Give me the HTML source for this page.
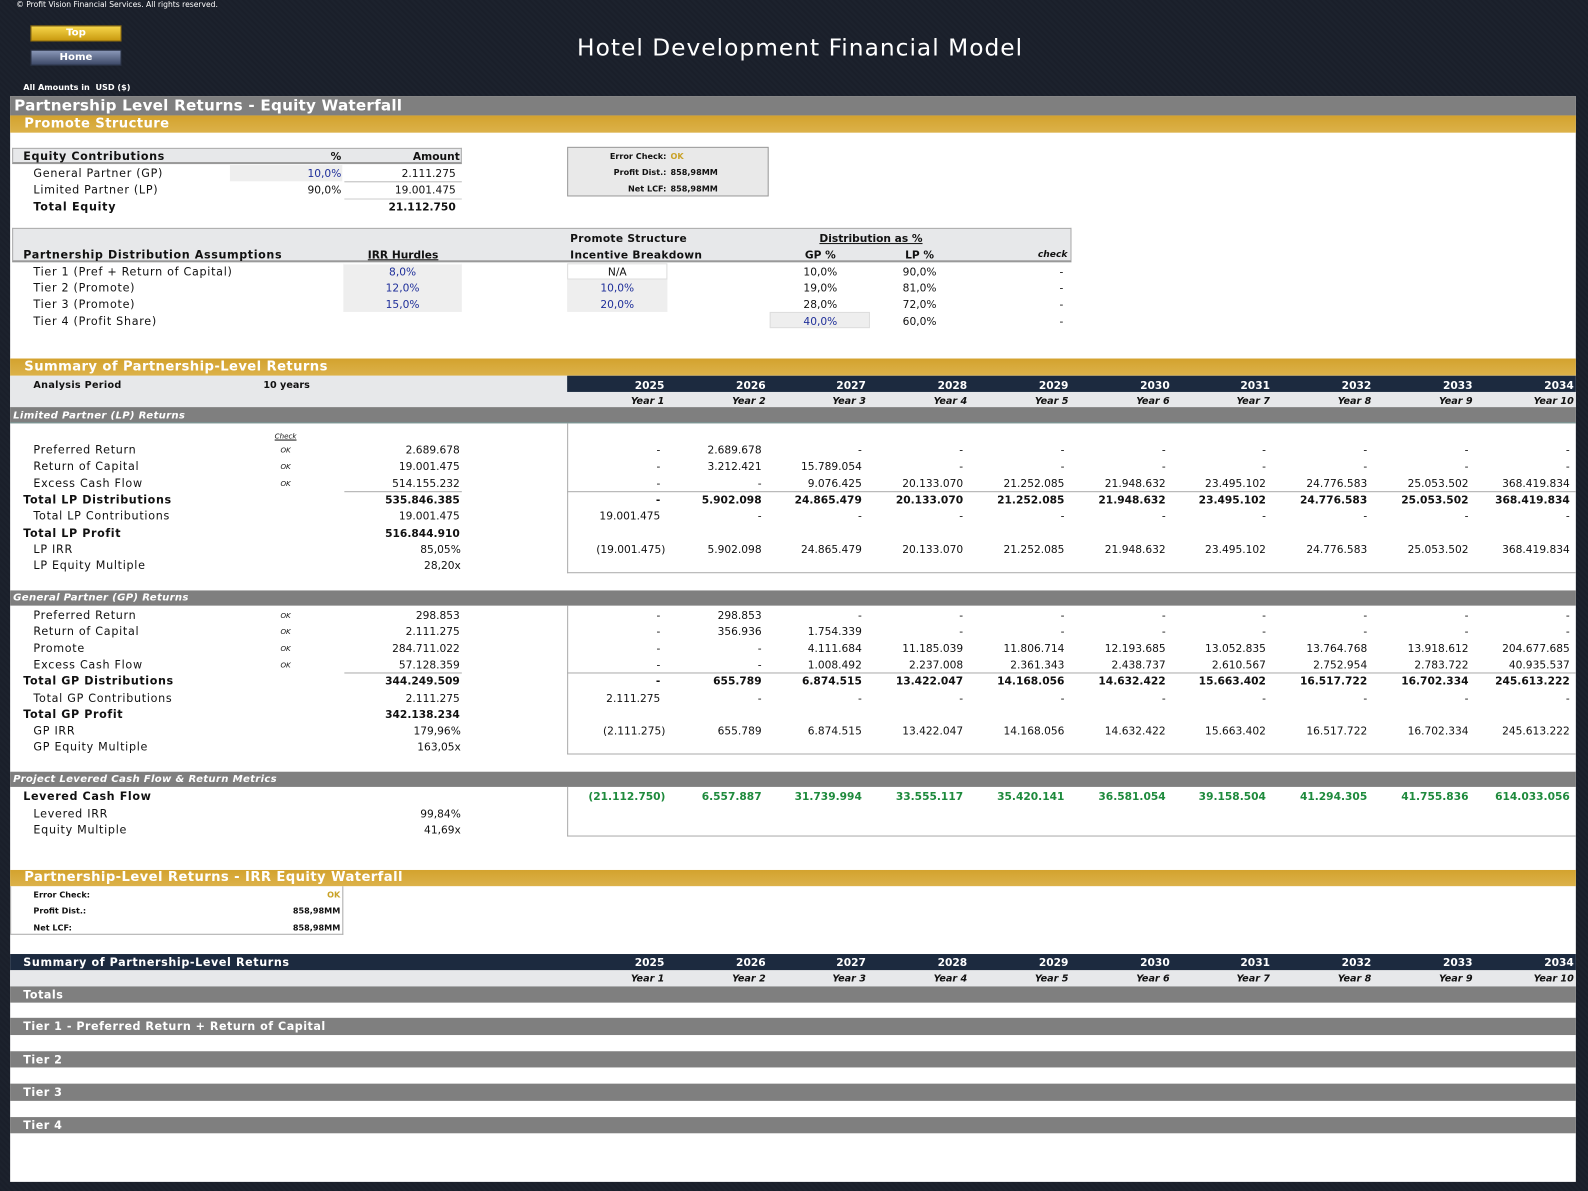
<!DOCTYPE html>
<html><head><meta charset="utf-8"><style>
*{margin:0;padding:0;box-sizing:border-box}
html,body{width:1588px;height:1191px;overflow:hidden;background:#1b202b}
body{font-family:"DejaVu Sans","Liberation Sans",sans-serif;color:#111}
.w{position:absolute;left:0;top:0;width:1568px;height:1176px;transform:scale(1.01276,1.01276);transform-origin:0 0;background:repeating-linear-gradient(45deg,#1a1f2a 0 2px,#20263222 2px 4px),#1c212c}
.a{position:absolute}
.r{position:absolute;left:0;width:1568px;height:14px;line-height:14px;font-size:10.5px}
.r span{position:absolute;white-space:nowrap}
.b{font-weight:bold}
.l1{left:23px;font-size:11px;letter-spacing:.6px}.l2{left:33px;font-size:11px;letter-spacing:.7px}
.ck{left:262px;width:40px;text-align:center;font-style:italic;font-size:7px}
.v{left:340px;width:114px;text-align:right}
.c1{left:556px}.c2{left:656px}.c3{left:755px}.c4{left:855px}.c5{left:955px}.c6{left:1055px}.c7{left:1154px}.c8{left:1254px}.c9{left:1354px}.c10{left:1454px}
.r .c1,.r .c2,.r .c3,.r .c4,.r .c5,.r .c6,.r .c7,.r .c8,.r .c9,.r .c10{width:96px;text-align:right}
.yr .c1,.yr .c2,.yr .c3,.yr .c4,.yr .c5,.yr .c6,.yr .c7,.yr .c8,.yr .c9,.yr .c10{width:100px}
.gray{position:absolute;left:10px;width:1546px;background:#7f7f7f;color:#fff;font-weight:bold}
.gold{position:absolute;left:10px;width:1546px;background:linear-gradient(#d3a22e,#dcb24a);color:#fff;font-weight:bold;font-size:13px;padding-left:14px;letter-spacing:.4px}
.navy{background:#1c2a3f;color:#fff;font-weight:bold}
.lg{background:#e7e8ea}
.g{color:#1e8a3c;font-weight:bold}
.blue{color:#1f2f9a}
</style></head><body><div class="w">
<div class="a" style="left:16px;top:0;font-size:7.5px;color:#fff">© Profit Vision Financial Services. All rights reserved.</div>
<div class="a" style="left:30px;top:25px;width:90px;height:16px;background:linear-gradient(#f6d64a,#c99a10);border:1px solid #8a6a10;color:#fff;font-weight:bold;font-size:10px;text-align:center;line-height:14px">Top</div>
<div class="a" style="left:30px;top:49px;width:90px;height:16px;background:linear-gradient(#8a98b8,#3c4866);border:1px solid #2a3244;color:#fff;font-weight:bold;font-size:10px;text-align:center;line-height:14px">Home</div>
<div class="a" style="left:490px;top:35px;width:600px;text-align:center;color:#fff;font-size:23px;letter-spacing:1px">Hotel Development Financial Model</div>
<div class="a" style="left:23px;top:82px;color:#fff;font-size:8px;font-weight:bold">All Amounts in&nbsp; USD ($)</div>

<div class="a" style="left:10px;top:95px;width:1546px;height:1072px;background:#fff"></div>
<div class="gray" style="top:95px;height:19px;font-size:15px;line-height:19px;padding-left:4px;letter-spacing:.2px">Partnership Level Returns - Equity Waterfall</div>
<div class="gold" style="top:114px;height:17px;line-height:17px">Promote Structure</div>

<div class="a lg" style="left:12px;top:146px;width:444px;height:16px;border:1px solid #aaa;border-bottom:2px solid #999"></div>
<div class="a" style="left:227px;top:163px;width:111px;height:16px;background:#eee"></div>
<div class="a" style="left:340px;top:179px;width:116px;height:1px;background:#bbb"></div>
<div class="a" style="left:340px;top:196px;width:116px;height:1px;background:#ccc"></div>
<div class="r b" style="top:148px"><span class="l1">Equity Contributions</span><span style="left:300px;width:37px;text-align:right">%</span><span class="v">Amount</span></div>
<div class="r" style="top:165px"><span class="l2">General Partner (GP)</span><span class="blue" style="left:260px;width:77px;text-align:right">10,0%</span><span class="v" style="width:110px">2.111.275</span></div>
<div class="r" style="top:181px"><span class="l2">Limited Partner (LP)</span><span style="left:260px;width:77px;text-align:right">90,0%</span><span class="v" style="width:110px">19.001.475</span></div>
<div class="r b" style="top:198px"><span class="l2">Total Equity</span><span class="v" style="width:110px">21.112.750</span></div>

<div class="a" style="left:560px;top:145px;width:199px;height:49px;background:#e9e9e9;border:1px solid #999"></div>
<div class="r b" style="top:148px;font-size:8px"><span style="left:560px;width:98px;text-align:right">Error Check:</span><span style="left:662px;color:#c9a227">OK</span></div>
<div class="r b" style="top:164px;font-size:8px"><span style="left:560px;width:98px;text-align:right">Profit Dist.:</span><span style="left:662px">858,98MM</span></div>
<div class="r b" style="top:180px;font-size:8px"><span style="left:560px;width:98px;text-align:right">Net LCF:</span><span style="left:662px">858,98MM</span></div>

<div class="a lg" style="left:12px;top:225px;width:1046px;height:34px;border:1px solid #aaa;border-bottom:2px solid #999"></div>
<div class="r b" style="top:229px"><span style="left:563px;letter-spacing:.3px">Promote Structure</span><span style="left:780px;width:160px;text-align:center;text-decoration:underline">Distribution as %</span></div>
<div class="r b" style="top:245px"><span class="l1">Partnership Distribution Assumptions</span><span style="left:340px;width:116px;text-align:center;text-decoration:underline">IRR Hurdles</span><span style="left:563px;letter-spacing:.3px">Incentive Breakdown</span><span style="left:770px;width:80px;text-align:center">GP %</span><span style="left:868px;width:80px;text-align:center">LP %</span><span style="left:1000px;width:54px;text-align:right;font-style:italic;font-size:9px">check</span></div>
<div class="a" style="left:339px;top:260px;width:117px;height:48px;background:#eee;border-top:1px solid #fff"></div>
<div class="a" style="left:560px;top:260px;width:99px;height:16px;background:#fff;border:1px solid #ddd"></div>
<div class="a" style="left:560px;top:276px;width:99px;height:32px;background:#eee"></div>
<div class="a" style="left:760px;top:308px;width:99px;height:16px;background:#eee;border:1px solid #ddd"></div>
<div class="r" style="top:262px"><span class="l2">Tier 1 (Pref + Return of Capital)</span><span class="blue" style="left:339px;width:117px;text-align:center">8,0%</span><span style="left:560px;width:99px;text-align:center">N/A</span><span style="left:770px;width:80px;text-align:center">10,0%</span><span style="left:868px;width:80px;text-align:center">90,0%</span><span style="left:1000px;width:50px;text-align:right">-</span></div>
<div class="r" style="top:278px"><span class="l2">Tier 2 (Promote)</span><span class="blue" style="left:339px;width:117px;text-align:center">12,0%</span><span class="blue" style="left:560px;width:99px;text-align:center">10,0%</span><span style="left:770px;width:80px;text-align:center">19,0%</span><span style="left:868px;width:80px;text-align:center">81,0%</span><span style="left:1000px;width:50px;text-align:right">-</span></div>
<div class="r" style="top:294px"><span class="l2">Tier 3 (Promote)</span><span class="blue" style="left:339px;width:117px;text-align:center">15,0%</span><span class="blue" style="left:560px;width:99px;text-align:center">20,0%</span><span style="left:770px;width:80px;text-align:center">28,0%</span><span style="left:868px;width:80px;text-align:center">72,0%</span><span style="left:1000px;width:50px;text-align:right">-</span></div>
<div class="r" style="top:311px"><span class="l2">Tier 4 (Profit Share)</span><span class="blue" style="left:770px;width:80px;text-align:center">40,0%</span><span style="left:868px;width:80px;text-align:center">60,0%</span><span style="left:1000px;width:50px;text-align:right">-</span></div>

<div class="gold" style="top:354px;height:17px;line-height:17px">Summary of Partnership-Level Returns</div>
<div class="a lg" style="left:10px;top:371px;width:1546px;height:31px"></div>
<div class="a navy" style="left:560px;top:371px;width:996px;height:16px"></div>
<div class="r b" style="top:374px;font-size:9.5px"><span class="l2" style="font-size:9.5px;letter-spacing:.3px">Analysis Period</span><span style="left:260px">10 years</span></div>
<div class="r yr b" style="top:374px;color:#fff"><span class="c1">2025</span><span class="c2">2026</span><span class="c3">2027</span><span class="c4">2028</span><span class="c5">2029</span><span class="c6">2030</span><span class="c7">2031</span><span class="c8">2032</span><span class="c9">2033</span><span class="c10">2034</span></div>
<div class="r yr b" style="top:390px;font-style:italic;font-size:9.5px"><span class="c1">Year 1</span><span class="c2">Year 2</span><span class="c3">Year 3</span><span class="c4">Year 4</span><span class="c5">Year 5</span><span class="c6">Year 6</span><span class="c7">Year 7</span><span class="c8">Year 8</span><span class="c9">Year 9</span><span class="c10">Year 10</span></div>

<div class="gray" style="top:402px;height:16px;line-height:17px;font-size:10px;font-style:italic;padding-left:3px;border-bottom:1px solid #7a9a98;letter-spacing:.3px">Limited Partner (LP) Returns</div>
<div class="a" style="left:560px;top:418px;width:996px;height:148px;border-left:1px solid #aaa;border-bottom:1px solid #aaa"></div>
<div class="a" style="left:340px;top:485px;width:116px;height:1px;background:#aaa"></div>
<div class="a" style="left:560px;top:485px;width:996px;height:1px;background:#aaa"></div>
<div class="r" style="top:424px"><span class="ck" style="text-decoration:underline">Check</span></div>
<div class="r" style="top:438px"><span class="l2">Preferred Return</span><span class="ck">OK</span><span class="v">2.689.678</span><span class="c1">-</span><span class="c2">2.689.678</span><span class="c3">-</span><span class="c4">-</span><span class="c5">-</span><span class="c6">-</span><span class="c7">-</span><span class="c8">-</span><span class="c9">-</span><span class="c10">-</span></div>
<div class="r" style="top:454px"><span class="l2">Return of Capital</span><span class="ck">OK</span><span class="v">19.001.475</span><span class="c1">-</span><span class="c2">3.212.421</span><span class="c3">15.789.054</span><span class="c4">-</span><span class="c5">-</span><span class="c6">-</span><span class="c7">-</span><span class="c8">-</span><span class="c9">-</span><span class="c10">-</span></div>
<div class="r" style="top:471px"><span class="l2">Excess Cash Flow</span><span class="ck">OK</span><span class="v">514.155.232</span><span class="c1">-</span><span class="c2">-</span><span class="c3">9.076.425</span><span class="c4">20.133.070</span><span class="c5">21.252.085</span><span class="c6">21.948.632</span><span class="c7">23.495.102</span><span class="c8">24.776.583</span><span class="c9">25.053.502</span><span class="c10">368.419.834</span></div>
<div class="r b" style="top:487px"><span class="l1">Total LP Distributions</span><span class="v">535.846.385</span><span class="c1">-</span><span class="c2">5.902.098</span><span class="c3">24.865.479</span><span class="c4">20.133.070</span><span class="c5">21.252.085</span><span class="c6">21.948.632</span><span class="c7">23.495.102</span><span class="c8">24.776.583</span><span class="c9">25.053.502</span><span class="c10">368.419.834</span></div>
<div class="r" style="top:503px"><span class="l2">Total LP Contributions</span><span class="v">19.001.475</span><span class="c1">19.001.475</span><span class="c2">-</span><span class="c3">-</span><span class="c4">-</span><span class="c5">-</span><span class="c6">-</span><span class="c7">-</span><span class="c8">-</span><span class="c9">-</span><span class="c10">-</span></div>
<div class="r b" style="top:520px"><span class="l1">Total LP Profit</span><span class="v">516.844.910</span></div>
<div class="r" style="top:536px"><span class="l2">LP IRR</span><span class="v" style="width:115px">85,05%</span><span class="c1" style="width:101px!important">(19.001.475)</span><span class="c2">5.902.098</span><span class="c3">24.865.479</span><span class="c4">20.133.070</span><span class="c5">21.252.085</span><span class="c6">21.948.632</span><span class="c7">23.495.102</span><span class="c8">24.776.583</span><span class="c9">25.053.502</span><span class="c10">368.419.834</span></div>
<div class="r" style="top:552px"><span class="l2">LP Equity Multiple</span><span class="v" style="width:115px">28,20x</span></div>

<div class="gray" style="top:583px;height:15px;line-height:16px;font-size:10px;font-style:italic;padding-left:3px;letter-spacing:.3px">General Partner (GP) Returns</div>
<div class="a" style="left:560px;top:598px;width:996px;height:147px;border-left:1px solid #aaa;border-bottom:1px solid #aaa"></div>
<div class="a" style="left:340px;top:664px;width:116px;height:1px;background:#aaa"></div>
<div class="a" style="left:560px;top:664px;width:996px;height:1px;background:#aaa"></div>
<div class="r" style="top:601px"><span class="l2">Preferred Return</span><span class="ck">OK</span><span class="v">298.853</span><span class="c1">-</span><span class="c2">298.853</span><span class="c3">-</span><span class="c4">-</span><span class="c5">-</span><span class="c6">-</span><span class="c7">-</span><span class="c8">-</span><span class="c9">-</span><span class="c10">-</span></div>
<div class="r" style="top:617px"><span class="l2">Return of Capital</span><span class="ck">OK</span><span class="v">2.111.275</span><span class="c1">-</span><span class="c2">356.936</span><span class="c3">1.754.339</span><span class="c4">-</span><span class="c5">-</span><span class="c6">-</span><span class="c7">-</span><span class="c8">-</span><span class="c9">-</span><span class="c10">-</span></div>
<div class="r" style="top:634px"><span class="l2">Promote</span><span class="ck">OK</span><span class="v">284.711.022</span><span class="c1">-</span><span class="c2">-</span><span class="c3">4.111.684</span><span class="c4">11.185.039</span><span class="c5">11.806.714</span><span class="c6">12.193.685</span><span class="c7">13.052.835</span><span class="c8">13.764.768</span><span class="c9">13.918.612</span><span class="c10">204.677.685</span></div>
<div class="r" style="top:650px"><span class="l2">Excess Cash Flow</span><span class="ck">OK</span><span class="v">57.128.359</span><span class="c1">-</span><span class="c2">-</span><span class="c3">1.008.492</span><span class="c4">2.237.008</span><span class="c5">2.361.343</span><span class="c6">2.438.737</span><span class="c7">2.610.567</span><span class="c8">2.752.954</span><span class="c9">2.783.722</span><span class="c10">40.935.537</span></div>
<div class="r b" style="top:666px"><span class="l1">Total GP Distributions</span><span class="v">344.249.509</span><span class="c1">-</span><span class="c2">655.789</span><span class="c3">6.874.515</span><span class="c4">13.422.047</span><span class="c5">14.168.056</span><span class="c6">14.632.422</span><span class="c7">15.663.402</span><span class="c8">16.517.722</span><span class="c9">16.702.334</span><span class="c10">245.613.222</span></div>
<div class="r" style="top:683px"><span class="l2">Total GP Contributions</span><span class="v">2.111.275</span><span class="c1">2.111.275</span><span class="c2">-</span><span class="c3">-</span><span class="c4">-</span><span class="c5">-</span><span class="c6">-</span><span class="c7">-</span><span class="c8">-</span><span class="c9">-</span><span class="c10">-</span></div>
<div class="r b" style="top:699px"><span class="l1">Total GP Profit</span><span class="v">342.138.234</span></div>
<div class="r" style="top:715px"><span class="l2">GP IRR</span><span class="v" style="width:115px">179,96%</span><span class="c1" style="width:101px!important">(2.111.275)</span><span class="c2">655.789</span><span class="c3">6.874.515</span><span class="c4">13.422.047</span><span class="c5">14.168.056</span><span class="c6">14.632.422</span><span class="c7">15.663.402</span><span class="c8">16.517.722</span><span class="c9">16.702.334</span><span class="c10">245.613.222</span></div>
<div class="r" style="top:731px"><span class="l2">GP Equity Multiple</span><span class="v" style="width:115px">163,05x</span></div>

<div class="gray" style="top:762px;height:15px;line-height:16px;font-size:10px;font-style:italic;padding-left:3px;letter-spacing:.3px">Project Levered Cash Flow &amp; Return Metrics</div>
<div class="a" style="left:560px;top:777px;width:996px;height:49px;border-left:1px solid #aaa;border-bottom:1px solid #aaa"></div>
<div class="r" style="top:780px"><span class="l1 b">Levered Cash Flow</span><span class="c1 g" style="width:101px!important">(21.112.750)</span><span class="c2 g">6.557.887</span><span class="c3 g">31.739.994</span><span class="c4 g">33.555.117</span><span class="c5 g">35.420.141</span><span class="c6 g">36.581.054</span><span class="c7 g">39.158.504</span><span class="c8 g">41.294.305</span><span class="c9 g">41.755.836</span><span class="c10 g">614.033.056</span></div>
<div class="r" style="top:797px"><span class="l2">Levered IRR</span><span class="v" style="width:115px">99,84%</span></div>
<div class="r" style="top:813px"><span class="l2">Equity Multiple</span><span class="v" style="width:115px">41,69x</span></div>

<div class="gold" style="top:859px;height:16px;line-height:16px">Partnership-Level Returns - IRR Equity Waterfall</div>
<div class="a" style="left:10px;top:875px;width:329px;height:48px;border:1px solid #aaa;border-top:none"></div>
<div class="r b" style="top:877px;font-size:8px"><span style="left:33px">Error Check:</span><span style="left:236px;width:100px;text-align:right;color:#c9a227">OK</span></div>
<div class="r b" style="top:893px;font-size:8px"><span style="left:33px">Profit Dist.:</span><span style="left:236px;width:100px;text-align:right">858,98MM</span></div>
<div class="r b" style="top:910px;font-size:8px"><span style="left:33px">Net LCF:</span><span style="left:236px;width:100px;text-align:right">858,98MM</span></div>

<div class="a navy" style="left:10px;top:942px;width:1546px;height:16px"></div>
<div class="a lg" style="left:10px;top:958px;width:1546px;height:16px"></div>
<div class="r b" style="top:944px;color:#fff"><span class="l1">Summary of Partnership-Level Returns</span></div>
<div class="r yr b" style="top:944px;color:#fff"><span class="c1">2025</span><span class="c2">2026</span><span class="c3">2027</span><span class="c4">2028</span><span class="c5">2029</span><span class="c6">2030</span><span class="c7">2031</span><span class="c8">2032</span><span class="c9">2033</span><span class="c10">2034</span></div>
<div class="r yr b" style="top:960px;font-style:italic;font-size:9.5px"><span class="c1">Year 1</span><span class="c2">Year 2</span><span class="c3">Year 3</span><span class="c4">Year 4</span><span class="c5">Year 5</span><span class="c6">Year 6</span><span class="c7">Year 7</span><span class="c8">Year 8</span><span class="c9">Year 9</span><span class="c10">Year 10</span></div>
<div class="gray" style="top:974px;height:16px;line-height:17px;font-size:11px;padding-left:13px;letter-spacing:.5px">Totals</div>
<div class="gray" style="top:1005px;height:17px;line-height:18px;font-size:11px;padding-left:13px;letter-spacing:.5px">Tier 1 - Preferred Return + Return of Capital</div>
<div class="gray" style="top:1038px;height:16px;line-height:17px;font-size:11px;padding-left:13px;letter-spacing:.5px">Tier 2</div>
<div class="gray" style="top:1070px;height:17px;line-height:18px;font-size:11px;padding-left:13px;letter-spacing:.5px">Tier 3</div>
<div class="gray" style="top:1103px;height:16px;line-height:17px;font-size:11px;padding-left:13px;letter-spacing:.5px">Tier 4</div>
</div></body></html>
